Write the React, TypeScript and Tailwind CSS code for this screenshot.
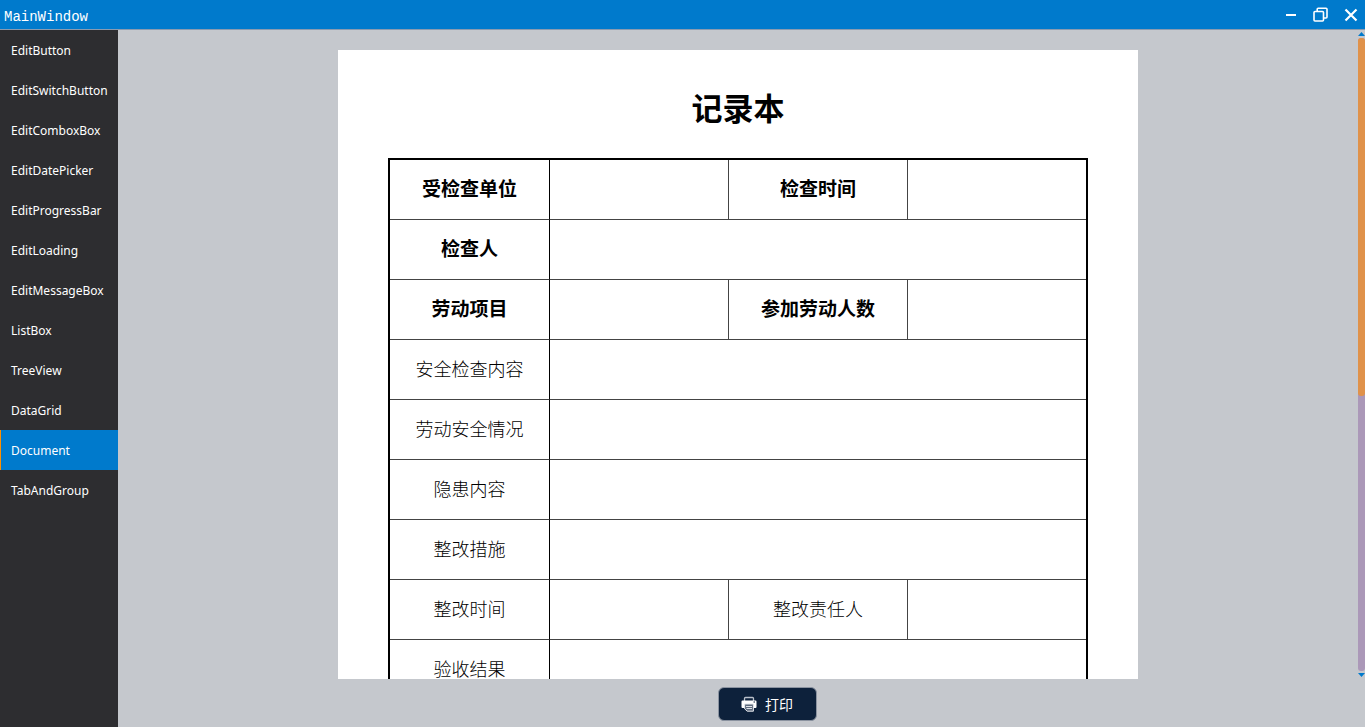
import { useState } from "react";

const pages = [
  "EditButton",
  "EditSwitchButton",
  "EditComboxBox",
  "EditDatePicker",
  "EditProgressBar",
  "EditLoading",
  "EditMessageBox",
  "ListBox",
  "TreeView",
  "DataGrid",
  "Document",
  "TabAndGroup",
];

type Row = { labels: string[]; strong?: boolean };

const rows: Row[] = [
  { labels: ["受检查单位", "检查时间"], strong: true },
  { labels: ["检查人"], strong: true },
  { labels: ["劳动项目", "参加劳动人数"], strong: true },
  { labels: ["安全检查内容"] },
  { labels: ["劳动安全情况"] },
  { labels: ["隐患内容"] },
  { labels: ["整改措施"] },
  { labels: ["整改时间", "整改责任人"] },
  { labels: ["验收结果"] },
];

function TitleBar() {
  return (
    <header className="flex h-[30px] shrink-0 items-center justify-between border-b border-[#8a9bb0] bg-[#007acc] text-white">
      <h1 className="pl-1 pt-1 font-['Liberation_Mono',monospace] text-sm leading-5">MainWindow</h1>
      <div className="flex">
        <button aria-label="Minimize" className="flex h-[29px] w-[30px] items-center justify-center">
          <svg width="16" height="16" viewBox="0 0 16 16" fill="none" stroke="currentColor" strokeWidth="2">
            <path d="M4 8H14" />
          </svg>
        </button>
        <button aria-label="Restore" className="flex h-[29px] w-[30px] items-center justify-center">
          <svg width="16" height="16" viewBox="0 0 16 16" fill="none" stroke="currentColor" strokeWidth="1.6">
            <rect x="2" y="4.500" width="9.500" height="9.500" rx="1" />
            <path d="M5.200 4.500V2.200a1 1 0 0 1 1-1h7.800a1 1 0 0 1 1 1v7.800a1 1 0 0 1-1 1H11.500" />
          </svg>
        </button>
        <button aria-label="Close" className="flex h-[29px] w-[30px] items-center justify-center">
          <svg width="16" height="16" viewBox="0 0 16 16" fill="none" stroke="currentColor" strokeWidth="2.2">
            <path d="M3.500 2.500L14.500 13.500M14.500 2.500L3.500 13.500" />
          </svg>
        </button>
      </div>
    </header>
  );
}

type LabelProps = { text: string; strong?: boolean; className: string };

function Label({ text, strong, className }: LabelProps) {
  return (
    <th
      scope="row"
      className={`border-b border-r border-b-[#444] p-0 pb-[2px] text-center ${
        strong ? "text-[19px] font-bold" : "text-[18px] font-light"
      } ${className}`}
    >
      {text}
    </th>
  );
}

function FormRow({ labels, strong }: Row) {
  return (
    <tr className="h-[60px]">
      <Label text={labels[0]} strong={strong} className="border-r-black" />
      {labels.length === 1 ? (
        <td colSpan={3} className="border-b border-[#444]" />
      ) : (
        <>
          <td className="border-b border-r border-[#444]" />
          <Label text={labels[1]} strong={strong} className="border-r-[#444]" />
          <td className="border-b border-[#444]" />
        </>
      )}
    </tr>
  );
}

function ScrollRail() {
  return (
    <div className="flex w-[7px] shrink-0 flex-col items-center justify-between py-[2px]" aria-hidden="true">
      <svg width="7" height="4" viewBox="0 0 7 4" fill="#007acc">
        <path d="M0 4L3.5 0L7 4z" />
      </svg>
      <div className="my-[2px] w-full flex-1 rounded-[3px] bg-[#ab98b8]">
        <div className="h-[56.6%] rounded-[3px] bg-[#e0924a]" />
      </div>
      <svg width="7" height="4" viewBox="0 0 7 4" fill="#007acc">
        <path d="M0 0L3.5 4L7 0z" />
      </svg>
    </div>
  );
}

function PrinterIcon() {
  return (
    <svg width="16" height="16" viewBox="0 0 16 16">
      <path d="M3.5 5V2.5a1 1 0 0 1 1-1h7a1 1 0 0 1 1 1V5" fill="none" stroke="#b9c0ca" strokeWidth="1.3" />
      <path d="M1.5 4.500h13a1 1 0 0 1 1 1V11a1 1 0 0 1-1 1H1.500a1 1 0 0 1-1-1V5.500a1 1 0 0 1 1-1z" fill="#fff" />
      <rect x="12.500" y="5.500" width="1.500" height="1" fill="#0d213b" />
      <path d="M3.600 8h8.800v7.200H6.200L3.600 12.800z" fill="#5d6a7d" stroke="#e6e9ed" strokeWidth="1" />
      <path d="M5 10.500h6M5.500 12.500h5.500" stroke="#dfe3e8" strokeWidth="1" />
    </svg>
  );
}

export default function App() {
  const [active, setActive] = useState("Document");
  return (
    <div className="flex h-screen flex-col bg-[#c5c8cd] font-['Noto_Sans_CJK_SC',sans-serif]">
      <TitleBar />
      <div className="flex min-h-0 flex-1">
        <nav className="w-[118px] shrink-0 bg-[#2d2d30] font-['Noto_Sans',sans-serif]">
          {pages.map((page) => (
            <button
              key={page}
              onClick={() => setActive(page)}
              className={
                page === active
                  ? "flex h-10 w-full items-center border-l border-[#ff9000] bg-[#007acc] pl-[10px] pt-px text-left text-xs text-white"
                  : "flex h-10 w-full items-center border-l border-transparent pl-[10px] pt-px text-left text-xs text-white"
              }
            >
              {page}
            </button>
          ))}
        </nav>
        <main className="flex min-w-0 flex-1 flex-col">
          <div className="flex min-h-0 flex-1">
            <div className="flex-1 overflow-y-auto pt-5 [scrollbar-width:none]">
              <article className="mx-auto w-[800px] bg-white px-[50px] pb-12 pt-[34px] text-black">
                <h2 className="pb-7 text-center text-[31px] font-bold leading-[46px]">记录本</h2>
                <table className="w-full table-fixed border-separate border-spacing-0 border-2 border-black">
                  <colgroup>
                    <col className="w-[160px]" />
                    <col className="w-[179px]" />
                    <col className="w-[179px]" />
                    <col />
                  </colgroup>
                  <tbody>
                    {rows.map((row) => (
                      <FormRow key={row.labels[0]} {...row} />
                    ))}
                  </tbody>
                </table>
              </article>
            </div>
            <ScrollRail />
          </div>
          <footer className="flex h-12 shrink-0 items-center justify-center pl-[51px] pt-[2px]">
            <button className="flex h-[34px] w-[99px] items-center justify-center gap-2 rounded-md border border-[#8b93a0] bg-[#0d213b] text-sm text-white">
              <PrinterIcon />
              打印
            </button>
          </footer>
        </main>
      </div>
    </div>
  );
}
